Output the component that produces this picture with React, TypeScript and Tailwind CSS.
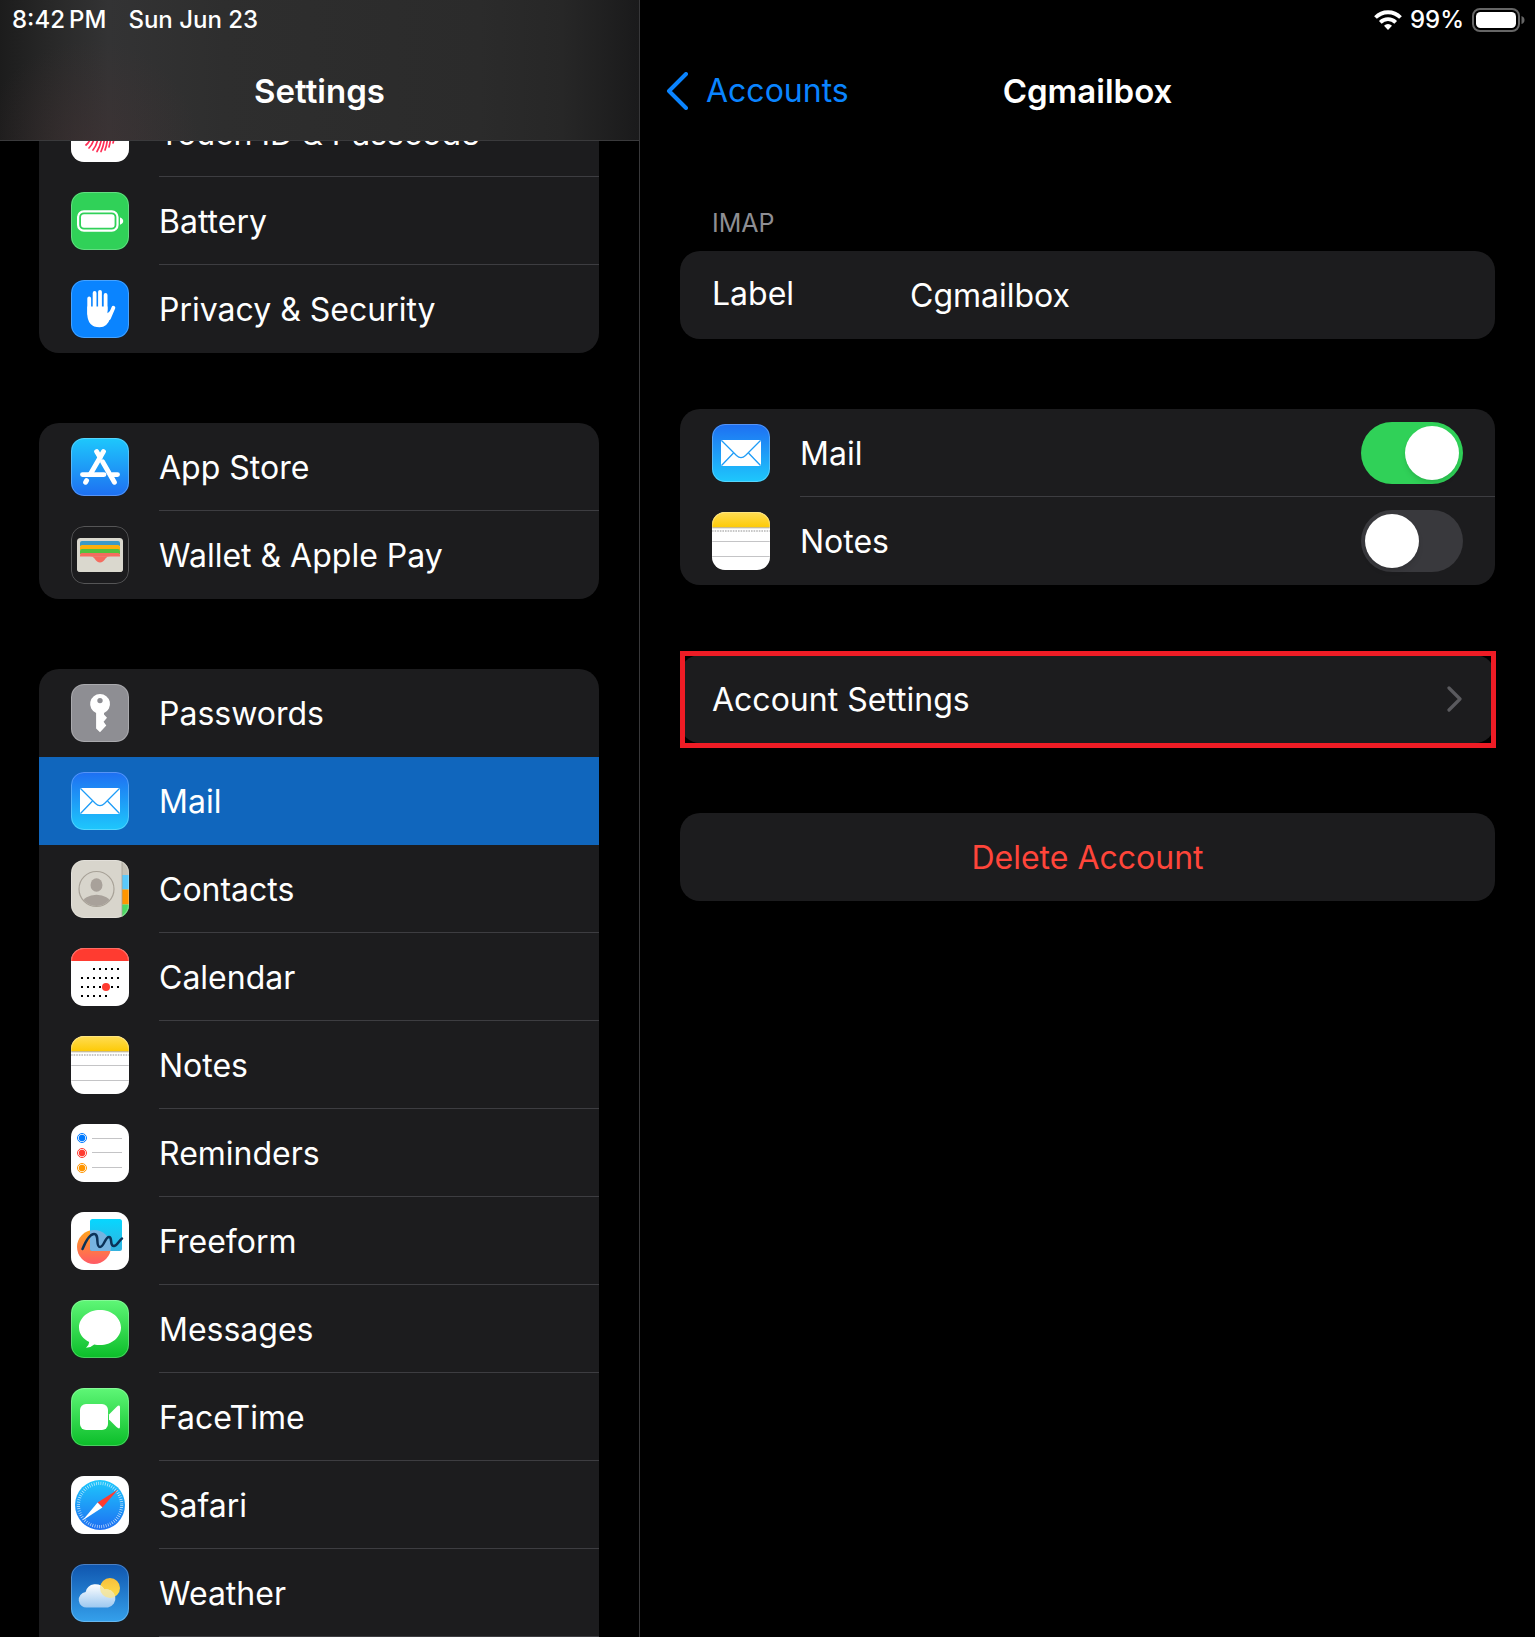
import React, { useState } from 'react';

type IconProps = { children: React.ReactNode; className?: string };

// Rounded 58px tile shared by every app icon
const Tile: React.FC<IconProps> = ({ children, className }) => (
  <svg viewBox="0 0 58 58" className={`size-[58px] shrink-0 rounded-[13px] ${className ?? ''}`} aria-hidden="true">
    {children}
    <rect x="0.5" y="0.5" width="57" height="57" rx="12.5" fill="none" stroke="#fff" strokeOpacity="0.25" />
  </svg>
);

interface GradientProps {
  id: string;
  from: string;
  to: string;
}

const Gradient: React.FC<GradientProps> = ({ id, from, to }) => (
  <linearGradient id={id} x1="0" y1="0" x2="0" y2="1">
    <stop offset="0" stopColor={from} />
    <stop offset="1" stopColor={to} />
  </linearGradient>
);

const TouchIdIcon = () => (
  <Tile>
    <rect width="58" height="58" fill="#fff" />
    <g fill="none" stroke="#ff2d55" strokeWidth="1.7" strokeLinecap="round">
      <path d="M14 36q4-3 4-10a11 11 0 0 1 22 0q0 10-2 17" />
      <path d="M15 41q6-5 6-15a8 8 0 0 1 16 0q0 12-3 20" />
      <path d="M18 44q6-6 6-18a5 5 0 0 1 10 0q0 13-4 21.500" />
      <path d="M22 46q5-6 5.500-17" />
      <path d="M26 47.500q5-8 5-20" />
      <path d="M43.500 28q0 6-1.500 11" />
    </g>
  </Tile>
);

const BatteryIcon = () => (
  <Tile>
    <rect width="58" height="58" fill="#30d158" />
    <rect x="7.1" y="19.3" width="39.400" height="19.4" rx="5.800" fill="none" stroke="#fff" strokeWidth="2.200" />
    <rect x="10" y="22.200" width="33.600" height="13.600" rx="3" fill="#fff" />
    <path d="M49 25.4q3.2 1 3.2 3.7T49 32.8z" fill="#fff" />
  </Tile>
);

const PrivacyIcon = () => (
  <Tile>
    <rect width="58" height="58" fill="#0a84ff" />
    <g stroke="#fff" strokeLinecap="round" strokeWidth="3.8">
      <path d="M18.2 18.5V34M23.6 13V30M29 11.8V30M34.6 15V30" />
      <path d="M42.4 27.8L38 38" />
    </g>
    <path d="M16.3 26.5h20.2v6.8l1.8-1.6 4.4-3.5-3.5 10q-2.8 9-10.6 9-12.3 0-12.3-14z" fill="#fff" />
  </Tile>
);

const AppStoreIcon = () => (
  <Tile>
    <Gradient id="appstore" from="#1ec8fc" to="#1e6ff2" />
    <rect width="58" height="58" fill="url(#appstore)" />
    <g stroke="#fff" strokeWidth="4.9" strokeLinecap="round" fill="none">
      <path d="M32.5 13.5L19.3 36.2M15.6 42.6L14.6 44.3" />
      <path d="M25.6 13.5L29 19.4M31.6 23.8L43.4 44.3" />
      <path d="M11.5 36.6H33M41.5 36.6h5" />
    </g>
  </Tile>
);

const WalletIcon = () => (
  <Tile>
    <rect width="58" height="58" fill="#1c1c1e" />
    <rect x="6" y="12" width="46" height="34" rx="3.5" fill="#dad8ce" />
    <path d="M9 20v-3a2 2 0 0 1 2-2h36a2 2 0 0 1 2 2v3z" fill="#3c9ac7" />
    <path d="M9 24v-3a2 2 0 0 1 2-2h36a2 2 0 0 1 2 2v3z" fill="#fdaf0b" />
    <path d="M9 28v-3a2 2 0 0 1 2-2h36a2 2 0 0 1 2 2v3z" fill="#52c13f" />
    <path d="M9 31v-2a2 2 0 0 1 2-2h36a2 2 0 0 1 2 2v2z" fill="#f56c5f" />
    <path d="M6 30.5h46V42.5q0 3.500-3.500 3.500h-39Q6 46 6 42.500z" fill="#dad8ce" />
    <path d="M19 30.300q3 0 4.500 2.200Q26 36.600 29 36.600t5.500-4.100q1.500-2.200 4.500-2.200z" fill="#f56c5f" />
  </Tile>
);

const PasswordsIcon = () => (
  <Tile>
    <rect width="58" height="58" fill="#8e8e93" />
    <path
      d="M29 10a9.900 9.900 0 0 1 4 19v1.500l3 3.300-3.400 4 2.700 3.700-6.300 6.800-3.900-3.800V29A9.900 9.900 0 0 1 29 10zm0 3.900a2.700 2.700 0 1 0 0 5.400 2.700 2.700 0 0 0 0-5.400z"
      fill="#fff"
      fillRule="evenodd"
    />
  </Tile>
);

const MailIcon = () => (
  <Tile>
    <Gradient id="mail" from="#1e6ff2" to="#1ec8fc" />
    <rect width="58" height="58" fill="url(#mail)" />
    <rect x="9" y="16" width="40" height="26" rx="1.500" fill="#fff" />
    <g fill="none" stroke="#1e9cf7" strokeWidth="1.300">
      <path d="M9.500 16.500L24.500 31.500q4.500 4.300 9 0L48.500 16.500" />
      <path d="M9.500 41.500L21.500 29M48.500 41.500L36.500 29" />
    </g>
  </Tile>
);

const ContactsIcon = () => (
  <Tile>
    <rect width="58" height="58" fill="#d8d5cc" />
    <rect x="51" width="7" height="15" fill="#c5c1b6" />
    <rect x="51" y="15" width="7" height="14.500" fill="#5ac8fa" />
    <rect x="51" y="29.500" width="7" height="15" fill="#ff9500" />
    <rect x="51" y="44.500" width="7" height="14" fill="#4cd964" />
    <path d="M51 0v58" stroke="#a39f96" strokeWidth="0.800" />
    <clipPath id="contact-face">
      <circle cx="25.500" cy="29" r="17" />
    </clipPath>
    <circle cx="25.500" cy="29" r="17.500" fill="none" stroke="#a8a298" strokeWidth="1.200" />
    <g fill="#a8a19a" clipPath="url(#contact-face)">
      <ellipse cx="25.500" cy="25" rx="6" ry="6.800" />
      <ellipse cx="25.500" cy="43.500" rx="14" ry="8.800" />
    </g>
  </Tile>
);

const CalendarIcon = () => (
  <Tile>
    <rect width="58" height="58" fill="#fff" />
    <rect width="58" height="13" fill="#ff3b30" />
    <g stroke="#000" strokeWidth="2" strokeDasharray="2 4">
      <path d="M22 21h26M10 30h38M10 39h38M10 48h26" />
    </g>
    <circle cx="35" cy="39" r="4" fill="#ff3b30" />
  </Tile>
);

const NotesIcon = () => (
  <Tile>
    <Gradient id="notes" from="#ffdd55" to="#fdca05" />
    <rect width="58" height="58" fill="#fff" />
    <rect width="58" height="15.500" fill="url(#notes)" />
    <path d="M0 15.800h58" stroke="#b3aa93" strokeWidth="1" />
    <path d="M0 19h58" stroke="#c8c8c8" strokeWidth="2" strokeDasharray="1.600 1" />
    <path d="M0 29.500h58M0 44.500h58" stroke="#c4c4c6" strokeWidth="1" />
  </Tile>
);

const RemindersIcon = () => (
  <Tile>
    <rect width="58" height="58" fill="#fff" />
    {[
      { y: 14, color: '#007aff' },
      { y: 29, color: '#ff3b30' },
      { y: 44, color: '#ff9500' },
    ].map(({ y, color }) => (
      <g key={color}>
        <circle cx="11" cy={y} r="4.500" fill="none" stroke={color} strokeWidth="1" />
        <circle cx="11" cy={y} r="3.200" fill={color} />
      </g>
    ))}
    <path d="M21 14.500h30M21 28.500h30M21 43.500h30" stroke="#c4c4c6" strokeWidth="1" />
  </Tile>
);

const FreeformIcon = () => (
  <Tile>
    <Gradient id="freeform-ball" from="#ffa41b" to="#ff5a66" />
    <Gradient id="freeform-sheet" from="#06d7ff" to="#34b1de" />
    <clipPath id="freeform-clip">
      <rect x="19" y="7" width="32" height="32" rx="2.500" />
    </clipPath>
    <rect width="58" height="58" fill="#fff" />
    <circle cx="23" cy="35" r="17" fill="url(#freeform-ball)" />
    <rect x="19" y="7" width="32" height="32" rx="2.500" fill="url(#freeform-sheet)" />
    <circle cx="23" cy="35" r="17" fill="#76b4e0" clipPath="url(#freeform-clip)" />
    <path
      d="M11.500 37C14 31 18 22 23 22c6 0 1 13 6 13 4 0 5-10 9-10s0 9 5 9c3 0 4.500-5 8-7.500"
      fill="none"
      stroke="#0b3358"
      strokeWidth="2.500"
      strokeLinecap="round"
    />
  </Tile>
);

const MessagesIcon = () => (
  <Tile>
    <Gradient id="messages" from="#5ff777" to="#0bbd29" />
    <rect width="58" height="58" fill="url(#messages)" />
    <path
      d="M29 10c11.600 0 21 7.800 21 17.500S40.600 45 29 45q-3 0-5.800-.6-3 3-8.200 3.400 3-2.300 3.200-5.800C12 39 8 33.500 8 27.500 8 17.800 17.400 10 29 10z"
      fill="#fff"
    />
  </Tile>
);

const FaceTimeIcon = () => (
  <Tile>
    <Gradient id="facetime" from="#5ff777" to="#0bbd29" />
    <rect width="58" height="58" fill="url(#facetime)" />
    <rect x="9" y="16" width="28" height="26" rx="6" fill="#fff" />
    <path d="M38 26.500l7.500-7.500q3.500-3 3.500.5v19q0 3.500-3.500.5L38 31.500z" fill="#fff" />
  </Tile>
);

const SafariIcon = () => (
  <Tile>
    <Gradient id="safari" from="#1ec8fc" to="#1e6ff2" />
    <rect width="58" height="58" fill="#fff" />
    <circle cx="29" cy="29" r="25" fill="url(#safari)" />
    <circle cx="29" cy="29" r="21.600" fill="none" stroke="#fff" strokeOpacity="0.750" strokeWidth="3.200" strokeDasharray="0.700 1.560" />
    <path d="M47 13.500L31.400 31.400 26.600 26.600z" fill="#ff3b30" />
    <path d="M11.500 44.500L26.600 26.600 31.400 31.400z" fill="#fff" />
  </Tile>
);

const WeatherIcon = () => (
  <Tile>
    <Gradient id="weather" from="#0f55ae" to="#35a1ec" />
    <Gradient id="weather-sun" from="#f6bf3d" to="#ffe14a" />
    <Gradient id="weather-cloud" from="#ffffff" to="#9cc8f0" />
    <clipPath id="weather-clip">
      <path d="M16.500 43.500A7.700 7.700 0 0 1 14.600 28 10.200 10.200 0 0 1 33.400 25.400 9.200 9.200 0 1 1 37 43.500z" />
    </clipPath>
    <rect width="58" height="58" fill="url(#weather)" />
    <circle cx="39" cy="24" r="10" fill="url(#weather-sun)" />
    <path d="M16.500 43.500A7.700 7.700 0 0 1 14.600 28 10.200 10.200 0 0 1 33.400 25.400 9.200 9.200 0 1 1 37 43.500z" fill="url(#weather-cloud)" />
    <circle cx="39" cy="24" r="10" fill="#f8e58e" fillOpacity="0.800" clipPath="url(#weather-clip)" />
  </Tile>
);

interface SettingsItem {
  label: string;
  icon: React.FC;
}

const groups: SettingsItem[][] = [
  [
    { label: 'Touch ID & Passcode', icon: TouchIdIcon },
    { label: 'Battery', icon: BatteryIcon },
    { label: 'Privacy & Security', icon: PrivacyIcon },
  ],
  [
    { label: 'App Store', icon: AppStoreIcon },
    { label: 'Wallet & Apple Pay', icon: WalletIcon },
  ],
  [
    { label: 'Passwords', icon: PasswordsIcon },
    { label: 'Mail', icon: MailIcon },
    { label: 'Contacts', icon: ContactsIcon },
    { label: 'Calendar', icon: CalendarIcon },
    { label: 'Notes', icon: NotesIcon },
    { label: 'Reminders', icon: RemindersIcon },
    { label: 'Freeform', icon: FreeformIcon },
    { label: 'Messages', icon: MessagesIcon },
    { label: 'FaceTime', icon: FaceTimeIcon },
    { label: 'Safari', icon: SafariIcon },
    { label: 'Weather', icon: WeatherIcon },
  ],
];

interface SidebarRowProps {
  item: SettingsItem;
  selected: boolean;
  divider: boolean;
  onSelect: () => void;
}

const SidebarRow: React.FC<SidebarRowProps> = ({ item, selected, divider, onSelect }) => {
  const Icon = item.icon;
  return (
    <button
      onClick={onSelect}
      className={`flex h-[88px] w-full items-center gap-[30px] pl-8 text-left ${selected ? 'bg-[#1066bd]' : ''}`}
    >
      <Icon />
      <span className={`flex h-full flex-1 items-center border-b pt-0.5 ${divider ? 'border-[#3d3d41]' : 'border-transparent'}`}>
        {item.label}
      </span>
    </button>
  );
};

interface ToggleRowProps {
  item: SettingsItem;
  defaultChecked: boolean;
  divider: boolean;
}

const ToggleRow: React.FC<ToggleRowProps> = ({ item, defaultChecked, divider }) => {
  const [checked, setChecked] = useState(defaultChecked);
  const Icon = item.icon;
  return (
    <label className="flex h-[88px] items-center gap-[30px] pl-8">
      <Icon />
      <span
        className={`flex h-full flex-1 items-center justify-between border-b pr-8 ${divider ? 'border-[#3d3d41]' : 'border-transparent'}`}
      >
        <span className="pt-0.5">{item.label}</span>
        <input
          type="checkbox"
          role="switch"
          checked={checked}
          onChange={(e) => setChecked(e.target.checked)}
          className="flex h-[62px] w-[102px] appearance-none items-center rounded-full bg-[#39393d] p-1 before:size-[54px] before:rounded-full before:bg-white before:shadow-md checked:justify-end checked:bg-[#30d158]"
        />
      </span>
    </label>
  );
};

const StatusRight = () => (
  <div className="flex h-10 items-center justify-end gap-2 pr-[10px] text-2xl font-medium">
    <svg viewBox="0 0 28 20" className="h-5 w-7" aria-label="Wi-Fi">
      <g fill="none" stroke="#fff" strokeWidth="3.800">
        <path d="M1.500 7.500a17.500 17.500 0 0 1 25 0" />
        <path d="M6.300 12.300a11 11 0 0 1 15.400 0" />
      </g>
      <path d="M14 20l-4-4.300a5.700 5.700 0 0 1 8 0z" fill="#fff" />
    </svg>
    <span>99%</span>
    <svg viewBox="0 0 53 24" className="h-6 w-[53px]" aria-label="Battery">
      <rect x="1" y="1" width="46" height="22" rx="7" fill="none" stroke="#fff" strokeOpacity="0.400" strokeWidth="2" />
      <rect x="4" y="4" width="40" height="16" rx="4.500" fill="#fff" />
      <path d="M49.500 8q3 1 3 4t-3 4z" fill="#fff" fillOpacity="0.400" />
    </svg>
  </div>
);

export default function App() {
  const [selected, setSelected] = useState('Mail');
  const [label, setLabel] = useState('Cgmailbox');

  return (
    <div className="flex h-screen overflow-hidden bg-black font-[Inter,'Liberation_Sans',sans-serif] text-[32px] leading-10 text-white">
      <aside className="flex w-[640px] shrink-0 flex-col border-r border-[#38383a]">
        <header className="h-[141px] shrink-0 border-b border-[#3a3a3c] bg-[radial-gradient(circle_at_90px_150px,#4a333566_0,transparent_110px),linear-gradient(90deg,#1c1c1c_0%,#282828_8%,#333334_17%,#2e2e2e_35%,#2b2b2b_75%,#272727_88%,#1a1a1b_100%)]">
          <div className="flex h-10 items-center gap-[22px] pl-3 text-2xl font-medium">
            <span>8:42&#8201;PM</span>
            <span>Sun Jun 23</span>
          </div>
          <h1 className="flex h-[100px] items-center justify-center pt-0.5 text-[33px] font-semibold">Settings</h1>
        </header>

        {/* List scrolled so that the first row sits half under the header */}
        <nav className="flex min-h-0 flex-1 flex-col justify-end gap-[70px] overflow-hidden pl-[39px] pr-10">
          {groups.map((items, g) => (
            <div
              key={g}
              className={`shrink-0 overflow-hidden bg-[#1c1c1e] ${g === groups.length - 1 ? 'rounded-t-[20px]' : 'rounded-[20px]'}`}
            >
              {items.map((item, i) => (
                <SidebarRow
                  key={item.label}
                  item={item}
                  selected={item.label === selected}
                  divider={item.label === 'Weather' || (i < items.length - 1 && selected !== item.label && selected !== items[i + 1].label)}
                  onSelect={() => setSelected(item.label)}
                />
              ))}
            </div>
          ))}
        </nav>
      </aside>

      <main className="flex min-w-0 flex-1 flex-col">
        <StatusRight />
        <header className="grid h-[100px] grid-cols-[1fr_auto_1fr] items-center pt-0.5">
          <a href="#accounts" className="flex items-center gap-[18px] pl-[26px] text-[#0a84ff]">
            <svg viewBox="0 0 22 38" className="h-[38px] w-[22px]" aria-hidden="true">
              <path d="M20 2L3 19l17 17" fill="none" stroke="#0a84ff" strokeWidth="4" strokeLinecap="round" strokeLinejoin="round" />
            </svg>
            Accounts
          </a>
          <h2 className="text-[33px] font-semibold">Cgmailbox</h2>
        </header>

        <div className="flex flex-col gap-[70px] px-10 pt-[63px]">
          <section>
            <h3 className="pb-2 pl-8 text-[25px] leading-10 text-[#8e8e93]">IMAP</h3>
            <label className="flex h-[88px] items-center rounded-[20px] bg-[#1c1c1e] px-8">
              <span className="w-[198px] pb-0.5">Label</span>
              <input
                type="text"
                value={label}
                onChange={(e) => setLabel(e.target.value)}
                className="min-w-0 flex-1 bg-transparent pt-0.5 outline-none"
              />
            </label>
          </section>

          <section className="overflow-hidden rounded-[20px] bg-[#1c1c1e]">
            <ToggleRow item={{ label: 'Mail', icon: MailIcon }} defaultChecked divider />
            <ToggleRow item={{ label: 'Notes', icon: NotesIcon }} defaultChecked={false} divider={false} />
          </section>

          <section className="relative">
            <button className="flex h-[88px] w-full items-center justify-between rounded-[20px] bg-[#1c1c1e] px-8">
              <span className="pt-0.5">Account Settings</span>
              <svg viewBox="0 0 16 26" className="h-[26px] w-4" aria-hidden="true">
                <path d="M2 2l11 11L2 24" fill="none" stroke="#5a5a5e" strokeWidth="3.200" strokeLinecap="round" strokeLinejoin="round" />
              </svg>
            </button>
            <div className="pointer-events-none absolute -top-1 -right-px -bottom-[5px] left-0 border-[5px] border-[#ee1c25]" />
          </section>

          <button className="h-[88px] rounded-[20px] bg-[#1c1c1e] pt-0.5 text-[#ff453a]">Delete Account</button>
        </div>
      </main>
    </div>
  );
}
